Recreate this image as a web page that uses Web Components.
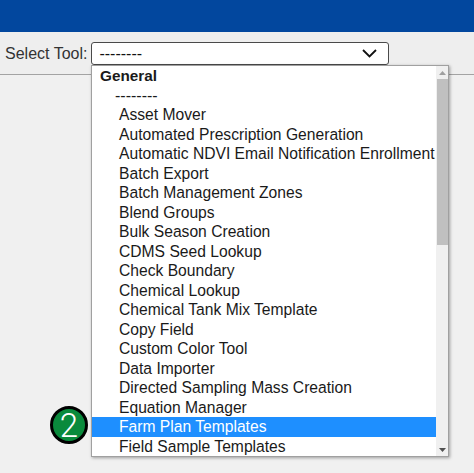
<!DOCTYPE html>
<html>
<head>
<meta charset="utf-8">
<style>
  html, body { margin: 0; height: 100%; overflow: hidden; background: #f0f0f0; font-family: "Liberation Sans", Arial, sans-serif; }
</style>
</head>
<body>
<tool-page></tool-page>
<script>
const TOOLS = ['Asset Mover', 'Automated Prescription Generation', 'Automatic NDVI Email Notification Enrollment',
  'Batch Export', 'Batch Management Zones', 'Blend Groups', 'Bulk Season Creation', 'CDMS Seed Lookup',
  'Check Boundary', 'Chemical Lookup', 'Chemical Tank Mix Template', 'Copy Field', 'Custom Color Tool',
  'Data Importer', 'Directed Sampling Mass Creation', 'Equation Manager', 'Farm Plan Templates', 'Field Sample Templates'];

class StepBadge extends HTMLElement {
  constructor() {
    super();
    this.attachShadow({ mode: 'open' }).innerHTML = `
      <style>
        :host { position: absolute; left: 50px; top: 406px; width: 38px; height: 38px; box-sizing: border-box;
          border: 3px solid #000; border-radius: 50%; background: #0a8a3c; color: #fff;
          display: flex; align-items: center; justify-content: center; font-family: Roboto, sans-serif; font-size: 33px; font-weight: 300; line-height: 1; }
      </style>
      <slot></slot>`;
  }
}
customElements.define('step-badge', StepBadge);

class ToolOption extends HTMLElement {
  constructor() {
    super();
    this.attachShadow({ mode: 'open' }).innerHTML = `
      <style>
        :host { display: block; height: 19.5px; line-height: 19px; padding-left: 27px; white-space: nowrap; color: #1a1a1a; }
        :host([selected]) { background: #1e8fff; color: #fff; }
        :host([group]) { padding-left: 8px; font-weight: bold; font-size: 15.300px; }
        :host([dashes]) { padding-left: 23px; font-size: 16px; }
      </style>
      <slot></slot>`;
  }
}
customElements.define('tool-option', ToolOption);

class ToolList extends HTMLElement {
  constructor() {
    super();
    this.attachShadow({ mode: 'open' }).innerHTML = `
      <style>
        :host { position: absolute; left: 91px; top: 65px; width: 358px; height: 392px; box-sizing: border-box;
          background: #fff; border: 1px solid #a0a0a0; box-shadow: 1px 1px 3px rgba(0,0,0,.35);
          display: flex; font-size: 15.650px; overflow: hidden; }
        #items { flex: 1; min-width: 0; }
        #bar { width: 12px; flex: none; background: #f0f0f0; display: flex; flex-direction: column; align-items: center; }
        #thumb { width: 11px; height: 166px; background: #c0c0c0; }
        .arrow { height: 13px; flex: none; display: flex; align-items: center; justify-content: center; }
        .fill { flex: 1; }
      </style>
      <div id="items"><slot></slot></div>
      <div id="bar">
        <div class="arrow"><svg width="7" height="4" viewBox="0 0 7 4"><path d="M3.5 0 7 4H0z" fill="#a0a0a0"/></svg></div>
        <div id="thumb"></div>
        <div class="fill"></div>
        <div class="arrow"><svg width="7" height="4" viewBox="0 0 7 4"><path d="M0 0h7L3.5 4z" fill="#505050"/></svg></div>
      </div>`;
  }
}
customElements.define('tool-list', ToolList);

class ToolSelect extends HTMLElement {
  constructor() {
    super();
    this.attachShadow({ mode: 'open' }).innerHTML = `
      <style>
        :host { display: flex; align-items: center; width: 298px; height: 23px; box-sizing: border-box;
          background: #fff; border: 1.500px solid #4a4a4a; border-radius: 3px; padding: 0 11px 0 7px; font-size: 16px; color: #111; }
        span { flex: 1; }
        svg { display: block; }
      </style>
      <span><slot></slot></span>
      <svg width="15" height="9" viewBox="0 0 15 9"><path d="M1 1l6.500 6.500L14 1" fill="none" stroke="#111" stroke-width="1.800"/></svg>`;
  }
}
customElements.define('tool-select', ToolSelect);

class ToolPage extends HTMLElement {
  constructor() {
    super();
    const options = TOOLS.map(t => `<tool-option${t === 'Farm Plan Templates' ? ' selected' : ''}>${t}</tool-option>`).join('');
    this.attachShadow({ mode: 'open' }).innerHTML = `
      <style>
        :host { display: block; position: relative; height: 473px; overflow: hidden; }
        header { height: 32px; background: #02479e; }
        #toolbar { height: 43px; box-sizing: border-box; background: #eeeeee; border-bottom: 1px solid #a3a3a3;
          display: flex; align-items: center; gap: 4px; padding: 1px 0 0 5px; font-size: 16px; color: #333; }
      </style>
      <header></header>
      <div id="toolbar"><label>Select Tool:</label><tool-select>--------</tool-select></div>
      <tool-list>
        <tool-option group>General</tool-option>
        <tool-option dashes>--------</tool-option>
        ${options}
      </tool-list>
      <step-badge>2</step-badge>`;
  }
}
customElements.define('tool-page', ToolPage);
</script>
</body>
</html>
